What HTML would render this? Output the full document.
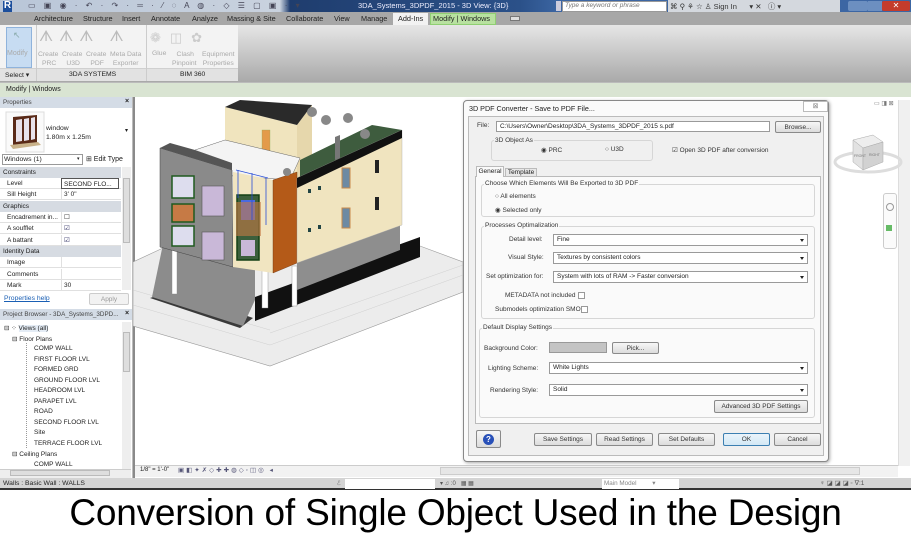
<!DOCTYPE html>
<html><head><meta charset="utf-8"><style>
*{margin:0;padding:0;box-sizing:border-box}
body{width:911px;height:538px;overflow:hidden;background:#fff;font-family:"Liberation Sans",sans-serif;font-size:7px;color:#222;position:relative}
.a{position:absolute}
.t{position:absolute;white-space:nowrap}
.btn{position:absolute;background:linear-gradient(#f6f6f6,#dcdcdc);border:1px solid #8a8a8a;border-radius:2px;text-align:center;font-size:6.5px;line-height:11px;color:#333}
.dd{position:absolute;background:#fff;border:1px solid #9a9a9a;font-size:6.5px;line-height:10px;padding-left:3px}
.dd:after{content:"";position:absolute;right:3px;top:4px;border:2.5px solid transparent;border-top:3px solid #222}
.fld{position:absolute;background:#fff;border:1px solid #9a9a9a;font-size:6.5px;line-height:10px;padding-left:3px;white-space:nowrap}
.grp{position:absolute;border:1px solid #d6d6d6;border-radius:3px}
.lbl{position:absolute;font-size:6.5px;color:#333;white-space:nowrap}
.row{position:absolute;left:0;width:121px;height:11px;border-bottom:1px solid #e0e0e0;font-size:6.5px;line-height:11px}
.row span{position:absolute;left:7px}
.row i{position:absolute;left:61px;top:0;height:11px;border-left:1px solid #e0e0e0;font-style:normal;padding-left:2px}
.sec{position:absolute;left:0;width:121px;height:11px;background:#d6dbe2;font-size:6.5px;line-height:11px;padding-left:3px}
.tr{position:absolute;font-size:6.5px;white-space:nowrap}
</style></head><body>
<!-- title bar -->
<div class="a" style="left:0;top:0;width:911px;height:12px;background:linear-gradient(90deg,#b9c6d8 0,#c9d2de 280px,#1f3d6e 290px,#2b5189 520px,#3c66a3 560px)"></div>
<div class="a" style="left:3px;top:1px;width:9px;height:11px;background:#1c4f9c;color:#fff;font-weight:bold;font-size:10px;line-height:10px;text-align:center">R</div>
<div class="t" style="left:28px;top:1px;font-size:8px;color:#445;letter-spacing:3px">▭ ▣ ◉ · ↶ · ↷ · ═ · ⁄ ◌ A  ◍ · ◇ ☰  ▢ ▣ · ▾</div>
<div class="t" style="left:358px;top:1px;font-size:7.5px;color:#eef">3DA_Systems_3DPDF_2015 - 3D View: {3D}</div>
<div class="a" style="left:556px;top:1px;width:5px;height:10px;background:#ccd;"></div>
<div class="a" style="left:562px;top:1px;width:105px;height:11px;background:#fff;border:1px solid #999"></div>
<div class="t" style="left:565px;top:2px;font-size:6.5px;font-style:italic;color:#777">Type a keyword or phrase</div>
<div class="a" style="left:668px;top:0;width:172px;height:12px;background:#d4d8de"></div>
<div class="t" style="left:670px;top:1px;font-size:7.5px;color:#333">⌘ ⚲ ⚘ ☆ ♙ Sign In &nbsp; &nbsp; &nbsp;▾ ✕ &nbsp; ⓘ ▾</div>
<div class="a" style="left:848px;top:1px;width:20px;height:10px;background:#6c8fc0;border-radius:2px"></div>
<div class="a" style="left:868px;top:1px;width:14px;height:10px;background:#6c8fc0"></div>
<div class="a" style="left:882px;top:1px;width:28px;height:10px;background:#c43c2c;border-radius:2px;color:#fff;font-size:8px;text-align:center;line-height:10px">✕</div>
<!-- tab row -->
<div class="a" style="left:0;top:12px;width:911px;height:13px;background:#a7a7a7"></div>
<div class="t" style="left:34px;top:14px;font-size:7.3px">Architecture</div>
<div class="t" style="left:83px;top:14px;font-size:7.3px">Structure</div>
<div class="t" style="left:122px;top:14px;font-size:7.3px">Insert</div>
<div class="t" style="left:151px;top:14px;font-size:7.3px">Annotate</div>
<div class="t" style="left:192px;top:14px;font-size:7.3px">Analyze</div>
<div class="t" style="left:227px;top:14px;font-size:7.3px">Massing &amp; Site</div>
<div class="t" style="left:286px;top:14px;font-size:7.3px">Collaborate</div>
<div class="t" style="left:334px;top:14px;font-size:7.3px">View</div>
<div class="t" style="left:361px;top:14px;font-size:7.3px">Manage</div>
<div class="a" style="left:393px;top:13px;width:35px;height:12px;background:#f2f2f2"></div>
<div class="t" style="left:398px;top:14px;font-size:7.3px">Add-Ins</div>
<div class="a" style="left:430px;top:13px;width:66px;height:12px;background:#b8e1a0;border:1px solid #8fcf72"></div>
<div class="t" style="left:433px;top:14px;font-size:7.3px">Modify | Windows</div>
<div class="a" style="left:510px;top:16px;width:10px;height:5px;background:#ddd;border:1px solid #777"></div>
<!-- ribbon -->
<div class="a" style="left:0;top:25px;width:911px;height:57px;background:linear-gradient(#e6e6e6,#a9a9a9)"></div>
<div class="a" style="left:0;top:25px;width:238px;height:56px;background:#f3f3f3"></div>
<div class="a" style="left:0;top:68px;width:238px;height:13px;background:#e2e2e2;border-top:1px solid #d0d0d0"></div>
<div class="a" style="left:36px;top:25px;width:1px;height:56px;background:#ccc"></div>
<div class="a" style="left:146px;top:25px;width:1px;height:56px;background:#ccc"></div>
<div class="a" style="left:6px;top:27px;width:26px;height:41px;background:#c7dcf2;border:1px solid #8fb3dc"></div>
<div class="t" style="left:13px;top:30px;font-size:9px;color:#8aa">↖</div>
<div class="t" style="left:7px;top:50px;font-size:7px;color:#aaa">Modify</div>
<div class="t" style="left:39px;top:28px;font-size:15px;color:#bbb;letter-spacing:6px">ᗑᗑᗑ ᗑ</div>
<div class="t" style="left:38px;top:50px;font-size:6.8px;color:#aaa;line-height:9px;text-align:center">Create<br>&nbsp;PRC</div>
<div class="t" style="left:62px;top:50px;font-size:6.8px;color:#aaa;line-height:9px;text-align:center">Create<br>&nbsp;U3D</div>
<div class="t" style="left:86px;top:50px;font-size:6.8px;color:#aaa;line-height:9px;text-align:center">Create<br>&nbsp;PDF</div>
<div class="t" style="left:110px;top:50px;font-size:6.8px;color:#aaa;line-height:9px;text-align:center">Meta Data<br>Exporter</div>
<div class="t" style="left:150px;top:30px;font-size:13px;color:#ccc;letter-spacing:9px">❁◫✿</div>
<div class="t" style="left:152px;top:50px;font-size:6.8px;color:#aaa">Glue</div>
<div class="t" style="left:172px;top:50px;font-size:6.8px;color:#aaa;line-height:9px;text-align:center">&nbsp;Clash<br>Pinpoint</div>
<div class="t" style="left:202px;top:50px;font-size:6.8px;color:#aaa;line-height:9px;text-align:center">Equipment<br>Properties</div>
<div class="t" style="left:5px;top:71px;font-size:6.8px">Select ▾</div>
<div class="t" style="left:69px;top:71px;font-size:6.8px">3DA SYSTEMS</div>
<div class="t" style="left:180px;top:71px;font-size:6.8px">BIM 360</div>
<!-- options bar -->
<div class="a" style="left:0;top:82px;width:911px;height:15px;background:#d9e4d2;border-top:1px solid #bbb"></div>
<div class="t" style="left:6px;top:86px;font-size:7px">Modify | Windows</div>
<!-- properties panel -->
<div class="a" style="left:0;top:97px;width:133px;height:381px;background:#fff;border-right:1px solid #bbb"></div>
<div class="a" style="left:0;top:97px;width:132px;height:11px;background:#d4dce6"></div>
<div class="t" style="left:3px;top:99px;font-size:6.3px;color:#444">Properties</div>
<div class="t" style="left:125px;top:98px;font-size:7px;font-weight:bold">×</div>
<svg class="a" style="left:5px;top:111px" width="40" height="42"><rect x="1" y="1" width="38" height="40" fill="#fafafa" stroke="#ddd"/><path d="M8 6 L32 4 L32 32 L8 34Z" fill="#5a2a18"/><path d="M11 9 L17 8 L17 30 L11 31Z M19 8 L24 7 L24 29 L19 30Z M26 7 L30 6 L30 28 L26 29Z" fill="#e8e2ea"/><path d="M5 34 L33 31 L36 34 L8 38Z" fill="#c9b28a"/></svg>
<div class="t" style="left:46px;top:124px;font-size:6.8px;line-height:9px">window<br>1.80m x 1.25m</div>
<div class="t" style="left:125px;top:127px;font-size:6px">▾</div>
<div class="a" style="left:2px;top:154px;width:81px;height:11px;border:1px solid #999;background:#fff"></div>
<div class="t" style="left:4px;top:156px;font-size:6.8px">Windows (1)</div>
<div class="t" style="left:77px;top:156px;font-size:5px">▾</div>
<div class="t" style="left:86px;top:155px;font-size:7px">⊞ Edit Type</div>
<div class="sec" style="top:167px">Constraints</div>
<div class="row" style="top:178px"><span>Level</span><i style="border:1px solid #555;width:58px">SECOND FLO...</i></div>
<div class="row" style="top:189px"><span>Sill Height</span><i>3' 0"</i></div>
<div class="sec" style="top:201px">Graphics</div>
<div class="row" style="top:212px"><span>Encadrement in...</span><i>☐</i></div>
<div class="row" style="top:223px"><span>A soufflet</span><i style="color:#336">☑</i></div>
<div class="row" style="top:235px"><span>A battant</span><i style="color:#336">☑</i></div>
<div class="sec" style="top:246px">Identity Data</div>
<div class="row" style="top:257px"><span>Image</span><i></i></div>
<div class="row" style="top:269px"><span>Comments</span><i></i></div>
<div class="row" style="top:280px"><span>Mark</span><i>30</i></div>
<div class="a" style="left:122px;top:167px;width:9px;height:123px;background:#eee"></div>
<div class="a" style="left:123px;top:178px;width:7px;height:65px;background:#dedede;border:1px solid #bbb"></div>
<div class="t" style="left:4px;top:295px;font-size:6.8px;color:#1a5fb4;text-decoration:underline">Properties help</div>
<div class="btn" style="left:89px;top:293px;width:40px;height:12px;color:#999;background:#f2f2f2;border-color:#ccc">Apply</div>
<div class="a" style="left:0;top:309px;width:132px;height:11px;background:#d4dce6"></div>
<div class="t" style="left:3px;top:311px;font-size:6.3px;color:#444">Project Browser - 3DA_Systems_3DPD...</div>
<div class="t" style="left:125px;top:310px;font-size:7px;font-weight:bold">×</div>
<div class="tr" style="left:4px;top:324px">⊟ ⁘ <b style="font-weight:normal;background:#e4ecf5">Views (all)</b></div>
<div class="tr" style="left:12px;top:335px">⊟ Floor Plans</div>
<div class="a" style="left:26px;top:343px;width:1px;height:105px;border-left:1px dotted #999"></div>
<div class="tr" style="left:34px;top:345px">COMP WALL</div>
<div class="tr" style="left:34px;top:356px">FIRST FLOOR LVL</div>
<div class="tr" style="left:34px;top:366px">FORMED GRD</div>
<div class="tr" style="left:34px;top:377px">GROUND FLOOR LVL</div>
<div class="tr" style="left:34px;top:387px">HEADROOM LVL</div>
<div class="tr" style="left:34px;top:398px">PARAPET LVL</div>
<div class="tr" style="left:34px;top:408px">ROAD</div>
<div class="tr" style="left:34px;top:419px">SECOND FLOOR LVL</div>
<div class="tr" style="left:34px;top:429px">Site</div>
<div class="tr" style="left:34px;top:440px">TERRACE FLOOR LVL</div>
<div class="tr" style="left:12px;top:450px">⊟ Ceiling Plans</div>
<div class="tr" style="left:34px;top:461px">COMP WALL</div>
<div class="a" style="left:122px;top:322px;width:9px;height:147px;background:#eee"></div>
<div class="a" style="left:123px;top:332px;width:7px;height:40px;background:#dedede;border:1px solid #bbb"></div>
<div class="a" style="left:0;top:469px;width:131px;height:9px;background:#eee;border-top:1px solid #ccc"></div>
<div class="a" style="left:10px;top:470px;width:100px;height:6px;background:#dedede;border:1px solid #bbb"></div>
<!-- view area -->
<div class="a" style="left:133px;top:97px;width:778px;height:381px;background:#fff;border-left:2px solid #8a8a8a"></div>
<div class="a" style="left:898px;top:100px;width:12px;height:366px;background:#f0f0f0;border-left:1px solid #ddd"></div>
<svg class="a" style="left:133px;top:97px" width="340" height="290" viewBox="133 97 340 290">
<polygon points="133,262 163,248 420,246 463,262 463,292 270,366 133,326" fill="#ececec" stroke="#999" stroke-width=".6"/>
<g stroke="#c8c8c8" stroke-width=".4"><line x1="133" y1="290" x2="270" y2="330"/><line x1="133" y1="305" x2="270" y2="345"/><line x1="270" y1="345" x2="463" y2="275"/><line x1="270" y1="333" x2="463" y2="265"/></g>
<polygon points="150,298 240,328 253,318 175,290" fill="#3a3a3a"/>
<polygon points="163,244 255,250 255,300 243,326 152,297" fill="#8c8c8c"/>
<polygon points="255,297 420,237 420,257 255,321" fill="#111"/>
<polygon points="297,262 400,222 400,250 297,290" fill="#8e8e8e"/>
<rect x="172" y="248" width="5" height="46" fill="#fff" stroke="#888" stroke-width=".4"/>
<rect x="262" y="258" width="6" height="50" fill="#fff" stroke="#888" stroke-width=".4"/>
<rect x="292" y="266" width="5" height="40" fill="#fff" stroke="#888" stroke-width=".4"/>
<polygon points="225,107 297,125 297,180 225,168" fill="#f0e4be"/>
<polygon points="297,125 312,105 312,170 297,180" fill="#e6d7ac"/>
<polygon points="225,107 240,100 312,105 297,125" fill="#2a2a2a"/>
<rect x="262" y="130" width="8" height="22" fill="#e39a4a" stroke="#8a5" stroke-width=".3"/>
<polygon points="195,150 225,140 300,158 290,180 220,175" fill="#f4f4f4" stroke="#666" stroke-width=".5"/>
<polygon points="300,160 372,125 402,130 402,165 300,205" fill="#3e5c3e"/>
<polygon points="160,148 232,170 233,267 160,247" fill="#8a8a8a" stroke="#444" stroke-width=".5"/>
<polygon points="160,148 170,143 195,150 232,163 232,170" fill="#555"/>
<polygon points="233,172 273,180 273,273 233,267" fill="#f1e5c1"/>
<polygon points="273,180 297,172 297,263 273,273" fill="#b45a18" stroke="#6a3510" stroke-width=".4"/>
<polygon points="297,178 402,130 402,225 297,263" fill="#f0e4bf" stroke="#aaa" stroke-width=".4"/>
<polygon points="297,178 402,130 402,138 297,188" fill="#111"/>
<polygon points="335,160 340,158 340,135 335,137" fill="#777"/>
<rect x="342" y="168" width="8" height="20" fill="#6d8aa3" stroke="#c8894a"/>
<rect x="342" y="208" width="8" height="20" fill="#6d8aa3" stroke="#c8894a"/>
<rect x="308" y="189" width="3" height="4" fill="#244"/><rect x="318" y="186" width="3" height="4" fill="#244"/>
<rect x="308" y="228" width="3" height="4" fill="#244"/><rect x="318" y="225" width="3" height="4" fill="#244"/>
<rect x="375" y="160" width="4" height="13" fill="#222"/><rect x="375" y="197" width="4" height="13" fill="#222"/>
<rect x="172" y="176" width="22" height="22" fill="#dde" stroke="#1f5a1f" stroke-width="1.5"/>
<rect x="172" y="204" width="22" height="18" fill="#c67a45" stroke="#1f5a1f" stroke-width="1.5"/>
<rect x="172" y="226" width="22" height="20" fill="#dde" stroke="#1f5a1f" stroke-width="1.5"/>
<rect x="202" y="186" width="22" height="30" fill="#c9b8d8" stroke="#555" stroke-width=".6"/>
<rect x="202" y="232" width="22" height="28" fill="#c9b8d8" stroke="#555" stroke-width=".6"/>
<rect x="237" y="195" width="22" height="65" fill="#3c5f3c" stroke="#154015" stroke-width="1.5"/>
<rect x="241" y="200" width="14" height="20" fill="#4a6ae0"/>
<rect x="241" y="240" width="14" height="16" fill="#c9b8d8"/>
<rect x="236" y="202" width="25" height="34" fill="#c67a45" opacity=".6"/>
<path d="M236 170 L268 178 M238 170 L238 198 M252 173 L252 220 M266 178 L266 225" stroke="#2a4fd8" stroke-width=".8" fill="none"/>
<circle cx="312" cy="112" r="5" fill="#888"/><circle cx="326" cy="120" r="5" fill="#888"/><circle cx="348" cy="118" r="5" fill="#888"/><circle cx="365" cy="134" r="5" fill="#888"/><circle cx="287" cy="172" r="4" fill="#888"/>
</svg>
<!-- nav cube -->
<svg class="a" style="left:833px;top:130px" width="70" height="45"><ellipse cx="35" cy="32" rx="33" ry="10" fill="none" stroke="#ddd" stroke-width="3"/><polygon points="20,10 40,5 50,12 30,18" fill="#eee" stroke="#aaa" stroke-width=".5"/><polygon points="20,10 30,18 30,40 20,32" fill="#e2e2e2" stroke="#aaa" stroke-width=".5"/><polygon points="30,18 50,12 50,32 30,40" fill="#d2d2d2" stroke="#aaa" stroke-width=".5"/><text x="21" y="27" font-size="3.5" fill="#777" font-family="Liberation Sans">FRONT</text><text x="36" y="26" font-size="3.5" fill="#777" font-family="Liberation Sans">RIGHT</text></svg>
<div class="t" style="left:874px;top:100px;font-size:6px;color:#777">▭ ◨ ⊠</div>
<div class="a" style="left:883px;top:193px;width:14px;height:56px;border:1px solid #ccc;border-radius:3px;background:#fbfbfb"></div>
<div class="a" style="left:886px;top:203px;width:8px;height:8px;border:1px solid #999;border-radius:50%"></div>
<div class="a" style="left:886px;top:225px;width:6px;height:6px;background:#6b6"></div>
<!-- view control bar -->
<div class="a" style="left:135px;top:465px;width:763px;height:12px;background:#f2f2f2;border-top:1px solid #ccc"></div>
<div class="t" style="left:140px;top:467px;font-size:6px">1/8" = 1'-0"</div>
<div class="t" style="left:178px;top:466px;font-size:6.5px;color:#557;letter-spacing:2px">▣◧✦✗◇✚✚◍◇◦◫◎ ◂</div>
<div class="a" style="left:440px;top:467px;width:420px;height:8px;background:#e6e6e6;border:1px solid #ccc"></div>
<!-- status bar -->
<div class="a" style="left:0;top:478px;width:911px;height:12px;background:#d4d4d4;border-bottom:2px solid #333"></div>
<div class="t" style="left:3px;top:480px;font-size:6.8px">Walls : Basic Wall : WALLS</div>
<div class="a" style="left:345px;top:479px;width:90px;height:10px;background:#fff"></div>
<div class="t" style="left:337px;top:480px;font-size:6px;color:#777">ℰ</div>
<div class="t" style="left:440px;top:480px;font-size:6px;color:#555">▾ ♫ :0 &nbsp; ▦ ▦</div>
<div class="a" style="left:602px;top:479px;width:77px;height:10px;background:#fff"></div>
<div class="t" style="left:604px;top:480px;font-size:6.3px;color:#888">Main Model &nbsp; &nbsp; &nbsp; &nbsp; ▾</div>
<div class="t" style="left:820px;top:479px;font-size:6.5px;color:#555">♆ ◪ ◪ ◪ ◦ ∇:1</div>
<!-- dialog -->
<div class="a" style="left:463px;top:100px;width:366px;height:362px;background:#fafafa;border:1px solid #888;border-radius:4px;box-shadow:1px 1px 3px #aaa"></div>
<div class="t" style="left:469px;top:104px;font-size:7.2px">3D PDF Converter - Save to PDF File...</div>
<div class="a" style="left:803px;top:101px;width:25px;height:11px;border:1px solid #bbb;background:#fff;color:#888;text-align:center;font-size:7px;line-height:10px">⊠</div>
<div class="a" style="left:468px;top:116px;width:356px;height:340px;background:#f0f0f0;border:1px solid #bbb"></div>
<div class="lbl" style="left:477px;top:122px">File:</div>
<div class="fld" style="left:496px;top:121px;width:274px;height:11px">C:\Users\Owner\Desktop\3DA_Systems_3DPDF_2015 s.pdf</div>
<div class="btn" style="left:775px;top:121px;width:46px;height:12px">Browse...</div>
<div class="grp" style="left:491px;top:140px;width:162px;height:21px"></div>
<div class="lbl" style="left:494px;top:137px;background:#f0f0f0;padding:0 1px">3D Object As</div>
<div class="lbl" style="left:541px;top:146px">◉ PRC</div>
<div class="lbl" style="left:605px;top:146px">○ U3D</div>
<div class="lbl" style="left:672px;top:146px">☑ Open 3D PDF after conversion</div>
<div class="a" style="left:475px;top:176px;width:346px;height:248px;background:#fafafa;border:1px solid #bbb"></div>
<div class="a" style="left:476px;top:166px;width:28px;height:11px;background:#fafafa;border:1px solid #bbb;border-bottom:none;font-size:6.5px;line-height:10px;text-align:center">General</div>
<div class="a" style="left:505px;top:168px;width:32px;height:9px;background:#e8e8e8;border:1px solid #bbb;font-size:6.5px;line-height:8px;text-align:center">Template</div>
<div class="grp" style="left:481px;top:184px;width:334px;height:33px"></div>
<div class="lbl" style="left:484px;top:180px;background:#fafafa;padding:0 1px">Choose Which Elements Will Be Exported to 3D PDF</div>
<div class="lbl" style="left:495px;top:193px">○ All elements</div>
<div class="lbl" style="left:495px;top:206px">◉ Selected only</div>
<div class="grp" style="left:481px;top:226px;width:334px;height:93px"></div>
<div class="lbl" style="left:484px;top:222px;background:#fafafa;padding:0 1px">Processes Optimalization</div>
<div class="lbl" style="left:509px;top:236px">Detail level:</div>
<div class="dd" style="left:553px;top:234px;width:255px;height:12px">Fine</div>
<div class="lbl" style="left:508px;top:254px">Visual Style:</div>
<div class="dd" style="left:553px;top:252px;width:255px;height:12px">Textures by consistent colors</div>
<div class="lbl" style="left:486px;top:273px">Set optimization for:</div>
<div class="dd" style="left:553px;top:271px;width:255px;height:12px">System with lots of RAM -&gt; Faster conversion</div>
<div class="lbl" style="left:505px;top:292px">METADATA not included</div>
<div class="a" style="left:578px;top:292px;width:7px;height:7px;border:1px solid #999;background:#fff"></div>
<div class="lbl" style="left:495px;top:306px">Submodels optimization SMO</div>
<div class="a" style="left:581px;top:306px;width:7px;height:7px;border:1px solid #999;background:#fff"></div>
<div class="grp" style="left:479px;top:328px;width:336px;height:90px"></div>
<div class="lbl" style="left:482px;top:324px;background:#fafafa;padding:0 1px">Default Display Settings</div>
<div class="lbl" style="left:484px;top:345px">Background Color:</div>
<div class="a" style="left:549px;top:342px;width:58px;height:11px;background:#c4c4c4;border:1px solid #999"></div>
<div class="btn" style="left:612px;top:342px;width:47px;height:12px">Pick...</div>
<div class="lbl" style="left:488px;top:365px">Lighting Scheme:</div>
<div class="dd" style="left:549px;top:362px;width:259px;height:12px">White Lights</div>
<div class="lbl" style="left:490px;top:387px">Rendering Style:</div>
<div class="dd" style="left:549px;top:384px;width:259px;height:12px">Solid</div>
<div class="btn" style="left:714px;top:400px;width:94px;height:13px;line-height:12px">Advanced 3D PDF Settings</div>
<div class="btn" style="left:476px;top:430px;width:25px;height:18px"><div style="width:11px;height:11px;margin:3px auto;border-radius:50%;background:#2850b8;color:#fff;font-size:8px;line-height:11px;font-weight:bold">?</div></div>
<div class="btn" style="left:534px;top:433px;width:58px;height:13px">Save Settings</div>
<div class="btn" style="left:596px;top:433px;width:57px;height:13px">Read Settings</div>
<div class="btn" style="left:658px;top:433px;width:57px;height:13px">Set Defaults</div>
<div class="btn" style="left:723px;top:433px;width:47px;height:13px;border-color:#3c7fb1;background:linear-gradient(#eaf4fb,#d3e8f5)">OK</div>
<div class="btn" style="left:774px;top:433px;width:47px;height:13px">Cancel</div>
<!-- caption -->
<div class="t" style="left:0;top:492px;width:911px;text-align:center;font-size:37px;color:#000;letter-spacing:-0.2px">Conversion of Single Object Used in the Design</div>
</body></html>
